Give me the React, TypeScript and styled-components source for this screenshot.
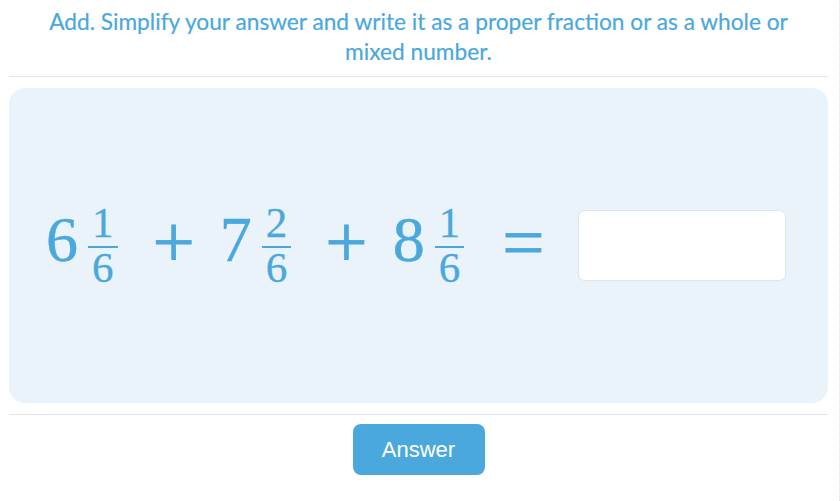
import React from "react";
import styled, { createGlobalStyle } from "styled-components";

const Global = createGlobalStyle`
  html, body { margin: 0; padding: 0; background: #ffffff; }
  * { box-sizing: border-box; }
`;

const BLUE = "#4aa8dc";

const Page = styled.div`
  width: 840px;
  height: 501px;
  display: flex;
  flex-direction: column;
  padding: 0 11px 0 9px;
  border-right: 1px dotted #dcdcdc;
`;

const Header = styled.div`
  padding: 7px 30px 9px;
  border-bottom: 1px solid #e4e4e4;
  text-align: center;
  font-family: Lato, "Noto Sans", sans-serif;
  font-size: 22.7px;
  line-height: 30px;
  color: ${BLUE};
  -webkit-text-stroke: 0.2px ${BLUE};
`;

const Panel = styled.div`
  margin-top: 11px;
  height: 315px;
  border-radius: 16px;
  background: #eaf3f9;
  display: flex;
  align-items: center;
  padding-left: 37px;
  font-family: "Liberation Serif", "Times New Roman", serif;
  color: ${BLUE};
`;

const Whole = styled.span`
  font-size: 64px;
  line-height: 64px;
  margin-bottom: 11px;
  -webkit-text-stroke: 0.4px ${BLUE};
`;

const Fraction = styled.span`
  display: inline-flex;
  flex-direction: column;
  align-items: stretch;
  margin-left: 10px;
  font-size: 43px;
  line-height: 36px;
  text-align: center;
  -webkit-text-stroke: 0.3px ${BLUE};
`;

const Num = styled.span`
  padding: 0 4px 5px;
`;

const Den = styled.span`
  border-top: 2px solid ${BLUE};
  padding: 2px 4px 0;
`;

const Op = styled.span<{ $left?: number; $right?: number }>`
  font-size: 75px;
  line-height: 75px;
  margin: 0 ${(p) => p.$right ?? 25}px 8px ${(p) => p.$left ?? 35}px;
  -webkit-text-stroke: 0.8px ${BLUE};
`;

const AnswerBox = styled.div`
  width: 208px;
  height: 71px;
  background: #ffffff;
  border: 1px solid #dfe5ea;
  border-radius: 7px;
`;

const Divider = styled.div`
  margin-top: 11px;
  height: 1px;
  background: #e4e4e4;
`;

const ButtonRow = styled.div`
  display: flex;
  justify-content: center;
  padding-top: 9px;
`;

const Button = styled.button`
  width: 132px;
  height: 51px;
  border: none;
  border-radius: 8px;
  background: ${BLUE};
  color: #ffffff;
  font-family: "Liberation Sans", Arial, sans-serif;
  font-size: 22px;
  cursor: pointer;
`;

const Mixed = ({ w, n, d }: { w: number; n: number; d: number }) => (
  <>
    <Whole>{w}</Whole>
    <Fraction>
      <Num>{n}</Num>
      <Den>{d}</Den>
    </Fraction>
  </>
);

export default function App() {
  return (
    <Page>
      <Global />
      <Header>
        Add. Simplify your answer and write it as a proper fraction or as a whole or mixed number.
      </Header>
      <Panel>
        <Mixed w={6} n={1} d={6} />
        <Op>+</Op>
        <Mixed w={7} n={2} d={6} />
        <Op $left={34}>+</Op>
        <Mixed w={8} n={1} d={6} />
        <Op $left={38} $right={34}>=</Op>
        <AnswerBox />
      </Panel>
      <Divider />
      <ButtonRow>
        <Button>Answer</Button>
      </ButtonRow>
    </Page>
  );
}
